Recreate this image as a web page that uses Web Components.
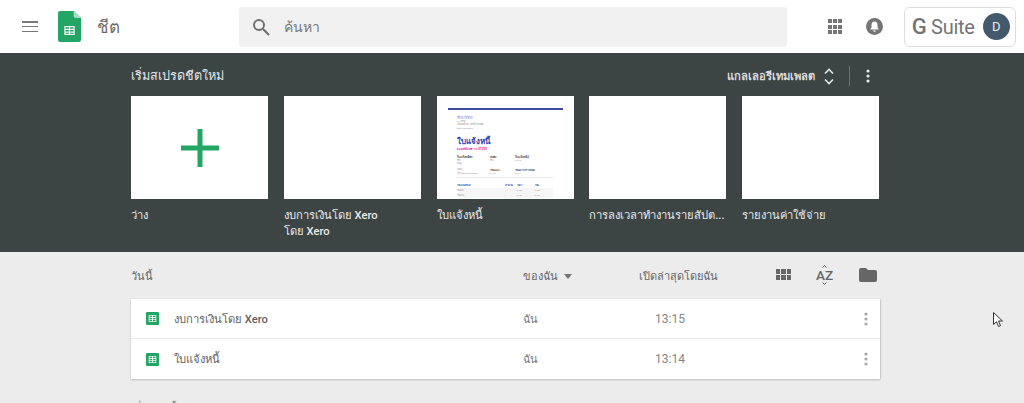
<!DOCTYPE html>
<html>
<head>
<meta charset="utf-8">
<style>
  html, body { margin: 0; height: 403px; overflow: hidden; background: #ececec; }
  body { font-family: Roboto, "Noto Sans", "Liberation Sans", sans-serif; position: relative; }
</style>
</head>
<body>
<app-header></app-header>
<template-strip></template-strip>
<doc-list></doc-list>
<mouse-cursor></mouse-cursor>
<script>
const SHEET_ICON = `<svg width="23" height="31" viewBox="0 0 22 31" preserveAspectRatio="none"><path d="M2 0h13l7 7v22a2 2 0 0 1-2 2H2a2 2 0 0 1-2-2V2a2 2 0 0 1 2-2z" fill="#23a566"/><path d="M15 0l7 7h-5a2 2 0 0 1-2-2z" fill="#a5dcc2"/><path d="M6 15h10v9H6z M7.200 16.200v1.600h3.200v-1.600z M11.600 16.200v1.600h3.200v-1.600z M7.200 19v1.600h3.200V19z M11.600 19v1.600h3.200V19z M7.200 21.800v1h3.200v-1z M11.600 21.800v1h3.200v-1z" fill="#f1f1f1" fill-rule="evenodd"/></svg>`;

class AppHeader extends HTMLElement {
  constructor() {
    super();
    const shadow = this.attachShadow({ mode: "open" });
    shadow.innerHTML = `
      <style>
        :host { display: flex; align-items: center; height: 53px; background: #fff; box-sizing: border-box; }
        .menu { margin-left: 22px; width: 16px; height: 11px; display: flex; flex-direction: column; justify-content: space-between; }
        .menu i { display: block; height: 1.5px; background: #777; }
        .logo { margin-left: 20px; display: flex; margin-top: -1px; }
        .title { margin-left: 16px; width: 142px; font-size: 17px; color: #6b6b6b; }
        .search { width: 548px; height: 40px; background: #f1f1f1; border-radius: 3px; display: flex; align-items: center; box-sizing: border-box; padding-left: 13px; }
        .search span { margin-left: 14px; font-size: 14px; color: #777; }
        .apps { margin-left: 41px; display: grid; grid-template-columns: repeat(3, 4px); gap: 1.200px; }
        .apps i { width: 4px; height: 4px; background: #757575; display: block; }
        .bell { margin-left: 24px; display: flex; }
        .suite { margin-left: 20.400px; width: 112px; height: 40px; box-sizing: border-box; border: 1px solid #dadce0; border-radius: 6px; display: flex; align-items: center; padding-left: 7px; color: #757575; }
        .word { width: 71px; font-size: 20px; letter-spacing: -0.300px; white-space: nowrap; font-weight: 400; }
        .word b { font-weight: 500; font-size: 22px; }
        .avatar { width: 27px; height: 27px; border-radius: 50%; background: #44596b; color: #e6eaee; font-size: 13px; display: flex; align-items: center; justify-content: center; }
      </style>
      <div class="menu"><i></i><i></i><i></i></div>
      <div class="logo">${SHEET_ICON}</div>
      <div class="title">ชีต</div>
      <div class="search">
        <svg width="18" height="18" viewBox="0 0 18 18"><circle cx="7" cy="7" r="5" fill="none" stroke="#707070" stroke-width="2"/><path d="M11 11l6 6" stroke="#707070" stroke-width="2.200"/></svg>
        <span>ค้นหา</span>
      </div>
      <div class="apps">${"<i></i>".repeat(9)}</div>
      <div class="bell"><svg width="17" height="17" viewBox="0 0 17 17"><circle cx="8.500" cy="8.500" r="8.500" fill="#757575"/><path d="M8.500 3.600c-1.900 0-3 1.500-3 3.300v2.600L4.400 11v.6h8.200V11l-1.100-1.500V6.900c0-1.800-1.100-3.300-3-3.300z" fill="#fff"/><path d="M7.200 12.400h2.600a1.300 1.300 0 0 1-2.600 0z" fill="#fff"/></svg></div>
      <div class="suite"><span class="word"><b>G</b> Suite</span><span class="avatar">D</span></div>
    `;
  }
}
customElements.define("app-header", AppHeader);

class TemplateCard extends HTMLElement {
  constructor() {
    super();
    const shadow = this.attachShadow({ mode: "open" });
    shadow.innerHTML = `
      <style>
        :host { display: block; width: 137px; }
        .thumb { height: 103px; background: #fff; overflow: hidden; display: flex; align-items: center; justify-content: center; }
        .name { margin-top: 9px; font-size: 11.200px; line-height: 16px; font-weight: 500; color: #e8eaea; white-space: nowrap; }
      </style>
      <div class="thumb"><slot name="thumb"></slot></div>
      <div class="name"><slot></slot></div>
    `;
  }
}
customElements.define("template-card", TemplateCard);

class InvoiceThumb extends HTMLElement {
  constructor() {
    super();
    const shadow = this.attachShadow({ mode: "open" });
    shadow.innerHTML = `
      <style>
        :host { display: block; width: 137px; height: 103px; box-sizing: border-box; padding: 12px 11px 0; overflow: hidden; font-size: 2.400px; line-height: 3.300px; color: #9a9a9a; align-self: flex-start; }
        .bar { height: 2px; background: #3f4a9f; }
        .body { padding: 5px 0 0 9px; }
        .co { font-size: 4px; line-height: 5px; color: #8b8fe0; }
        h1 { margin: 7px 0 0; font-size: 8px; line-height: 10px; color: #3343a8; font-weight: 700; }
        .due { font-size: 2.800px; line-height: 4px; color: #e0209a; font-weight: 700; }
        .cols { margin-top: 4px; display: grid; grid-template-columns: 33px 25px 30px; row-gap: 3px; }
        .cols b { display: block; color: #444; font-size: 2.800px; line-height: 4px; }
        hr { margin: 1px 0 5px; border: 0; height: 1px; background: #ececec; width: 96px; }
        .table { width: 96px; display: grid; grid-template-columns: 48px 12px 18px 18px; line-height: 5px; }
        .table b { color: #3343a8; font-size: 2.600px; }
        .table span { background: #f6f6f6; }
      </style>
      <div class="bar"></div>
      <div class="body">
        <div class="co">ชื่อบริษัท</div>
        <div>123 ที่อยู่<br>เมือง จังหวัด รหัสไปรษณีย์<br>(000) 000-0000</div>
        <h1>ใบแจ้งหนี้</h1>
        <div class="due">ยอดที่ต้องชำระ $1,000</div>
        <div class="cols">
          <div><b>ใบแจ้งหนี้ถึง</b>ชื่อ<br>ที่อยู่</div>
          <div><b>ส่งถึง</b>ชื่อ</div>
          <div><b>ใบแจ้งหนี้ #</b>12345</div>
          <div>เมือง<br>โทร (000) 000-0000</div>
          <div><b>วันออก</b>01/01</div>
          <div><b>วันครบกำหนด</b>01/31</div>
        </div>
        <hr>
        <div class="table">
          <b>รายละเอียด</b><b>จำนวน</b><b>ราคา</b><b>รวม</b>
          <span>รายการ 1</span><span>1</span><span>$100</span><span>$100</span>
          <span>รายการ 2</span><span>1</span><span>$100</span><span>$100</span>
        </div>
      </div>
    `;
  }
}
customElements.define("invoice-thumb", InvoiceThumb);

class TemplateStrip extends HTMLElement {
  constructor() {
    super();
    const shadow = this.attachShadow({ mode: "open" });
    shadow.innerHTML = `
      <style>
        :host { display: block; height: 199px; background: #3c4444; box-sizing: border-box; padding: 0 145px 0 131px; }
        .head { height: 43px; margin-right: 9px; display: flex; align-items: center; padding-top: 3px; box-sizing: border-box; color: #e4e6e6; }
        .title { flex: 1; font-size: 12.600px; }
        .gallery { font-size: 11.200px; font-weight: 700; color: #d8dada; }
        .updown { margin-left: 9px; display: flex; }
        .sep { margin-left: 15px; width: 1px; height: 20px; background: #6c7272; }
        .dots { margin-left: 16px; display: flex; }
        .cards { display: flex; justify-content: space-between; }
      </style>
      <div class="head">
        <div class="title">เริ่มสเปรดชีตใหม่</div>
        <div class="gallery">แกลเลอรีเทมเพลต</div>
        <div class="updown"><svg width="10" height="17" viewBox="0 0 10 17"><path d="M1 5.500l4-4 4 4M1 11.500l4 4 4-4" fill="none" stroke="#e4e6e6" stroke-width="1.600"/></svg></div>
        <div class="sep"></div>
        <div class="dots"><svg width="4" height="14" viewBox="0 0 4 14"><circle cx="2" cy="2" r="1.600" fill="#e8eaea"/><circle cx="2" cy="7" r="1.600" fill="#e8eaea"/><circle cx="2" cy="12" r="1.600" fill="#e8eaea"/></svg></div>
      </div>
      <div class="cards">
        <template-card>
          <svg slot="thumb" width="38" height="38" viewBox="0 0 38 38"><path d="M16.500 0h5v16.500H38v5H21.500V38h-5V21.500H0v-5h16.500z" fill="#23a566"/></svg>
          ว่าง
        </template-card>
        <template-card>งบการเงินโดย Xero<br>โดย Xero</template-card>
        <template-card><invoice-thumb slot="thumb"></invoice-thumb>ใบแจ้งหนี้</template-card>
        <template-card>การลงเวลาทำงานรายสัปต...</template-card>
        <template-card>รายงานค่าใช้จ่าย</template-card>
      </div>
    `;
  }
}
customElements.define("template-strip", TemplateStrip);

class DocRow extends HTMLElement {
  constructor() {
    super();
    const shadow = this.attachShadow({ mode: "open" });
    const time = this.getAttribute("time");
    shadow.innerHTML = `
      <style>
        :host { display: flex; align-items: center; height: 40px; background: #fff; font-size: 11px; color: #777; box-sizing: border-box; }
        :host(:not(:last-child)) { border-bottom: 1px solid #e8e8e8; }
        svg.ic { margin-left: 15px; flex: none; }
        .name { margin-left: 15px; width: 349px; color: #5f5f5f; font-weight: 500; font-size: 11.200px; }
        .owner { width: 132px; }
        .time { width: 209px; font-size: 12px; color: #858585; }
      </style>
      <svg class="ic" width="13" height="13" viewBox="0 0 13 13"><rect width="13" height="13" rx="1" fill="#23a566"/><path d="M2.700 3h7.600v7H2.700z M3.500 3.800v1.300h2.500V3.800z M7 3.800v1.300h2.500V3.800z M3.500 6v1.300h2.500V6z M7 6v1.300h2.500V6z M3.500 8.100v1.100h2.500V8.100z M7 8.100v1.100h2.500V8.100z" fill="#eaf6f0" fill-rule="evenodd"/></svg>
      <div class="name"><slot></slot></div>
      <div class="owner">ฉัน</div>
      <div class="time">${time}</div>
      <svg width="4" height="14" viewBox="0 0 4 14"><circle cx="2" cy="2" r="1.600" fill="#a8a8a8"/><circle cx="2" cy="7" r="1.600" fill="#a8a8a8"/><circle cx="2" cy="12" r="1.600" fill="#a8a8a8"/></svg>
    `;
  }
}
customElements.define("doc-row", DocRow);

class DocList extends HTMLElement {
  constructor() {
    super();
    const shadow = this.attachShadow({ mode: "open" });
    shadow.innerHTML = `
      <style>
        :host { display: block; padding: 0 144px 0 131px; color: #666; font-size: 11px; }
        .head { height: 47px; display: flex; align-items: center; padding-top: 1px; box-sizing: border-box; }
        .today { width: 392px; }
        .owner { width: 116px; display: flex; align-items: center; gap: 6px; }
        .owner i { width: 0; height: 0; border: 4.500px solid transparent; border-top: 5px solid #757575; border-bottom: 0; }
        .recent { width: 137px; }
        .tools { display: flex; align-items: center; margin-top: -3px; }
        .grid { display: grid; grid-template-columns: repeat(3, 4.400px); grid-auto-rows: 5.200px; gap: 1px; }
        .grid i { display: block; background: #666; }
        .az { margin-left: 25px; width: 17px; height: 24px; }
        .folder { margin-left: 26px; display: flex; }
        .list { box-shadow: 0 1px 2px rgba(0,0,0,.2), 1px 0 1px rgba(0,0,0,.08); }
        .more { margin-top: 20px; font-size: 11px; color: #666; }
      </style>
      <div class="head">
        <div class="today">วันนี้</div>
        <div class="owner">ของฉัน<i></i></div>
        <div class="recent">เปิดล่าสุดโดยฉัน</div>
        <div class="tools">
          <div class="grid">${"<i></i>".repeat(6)}</div>
          <svg class="az" viewBox="0 0 17 24"><text x="0" y="17" font-family="Roboto" font-size="13.500" font-weight="500" fill="#666">A</text><text x="9" y="17" font-family="Roboto" font-size="13.500" font-weight="500" fill="#666">Z</text><path d="M6.700 4.500l1.800-2 1.800 2M6.700 19.500l1.800 2 1.800-2" fill="none" stroke="#666"/></svg>
          <div class="folder"><svg width="18" height="14" viewBox="0 0 18 14"><path d="M2 0h5l2 2h7a2 2 0 0 1 2 2v8a2 2 0 0 1-2 2H2a2 2 0 0 1-2-2V2a2 2 0 0 1 2-2z" fill="#666"/></svg></div>
        </div>
      </div>
      <div class="list">
        <doc-row time="13:15">งบการเงินโดย Xero</doc-row>
        <doc-row time="13:14">ใบแจ้งหนี้</doc-row>
      </div>
      <div class="more">เมื่อวานนี้</div>
    `;
  }
}
customElements.define("doc-list", DocList);

class MouseCursor extends HTMLElement {
  constructor() {
    super();
    const shadow = this.attachShadow({ mode: "open" });
    shadow.innerHTML = `
      <style>:host { position: absolute; left: 993px; top: 312px; display: block; width: 11px; height: 16px; }</style>
      <svg width="11" height="16" viewBox="0 0 11 16"><path d="M.5.500v12l3-2.800 2 4.800 2-.9-2-4.600h4z" fill="#fff" stroke="#333" stroke-width="1"/></svg>
    `;
  }
}
customElements.define("mouse-cursor", MouseCursor);
</script>
</body>
</html>
